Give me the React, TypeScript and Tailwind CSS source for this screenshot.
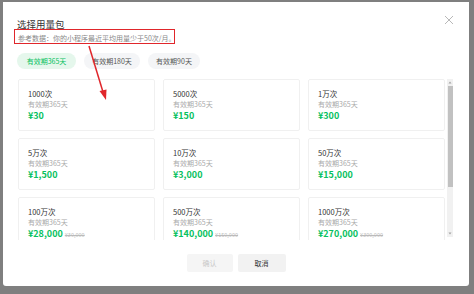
import React from "react";

const cards = [
  { n: "1000次", p: "¥30" },
  { n: "5000次", p: "¥150" },
  { n: "1万次", p: "¥300" },
  { n: "5万次", p: "¥1,500" },
  { n: "10万次", p: "¥3,000" },
  { n: "50万次", p: "¥15,000" },
  { n: "100万次", p: "¥28,000", o: "¥30,000" },
  { n: "500万次", p: "¥140,000", o: "¥150,000" },
  { n: "1000万次", p: "¥270,000", o: "¥300,000" },
];

export default function App() {
  return (
    <div
      className="w-[474px] h-[294px] bg-[#7f7f7f] pt-[2px] pl-[3px] overflow-hidden"
      style={{ fontFamily: '"Noto Sans CJK SC", "Noto Sans", sans-serif' }}
    >
      <div className="relative w-[466px] h-[284px] bg-white rounded-b-[3px] px-[14px] flex flex-col">
        {/* close */}
        <svg className="absolute left-[441px] top-[13px]" width="10" height="10" viewBox="0 0 10 10">
          <path d="M1 1 L9 9 M9 1 L1 9" stroke="#b0b0b0" strokeWidth="0.9" fill="none" />
        </svg>
        <div className="pt-[16px] text-[9.5px] leading-[12px] text-[#333]">选择用量包</div>
        <div className="mt-[3px] ml-[1px] text-[7px] leading-[10px] text-[#888]">
          参考数据：你的小程序最近平均用量少于50次/月。
        </div>
        <div className="mt-[10px] flex gap-[8px] text-[7px]">
          <div className="h-[16px] w-[59px] rounded-full bg-[#e5f7ec] text-[#07c160] flex items-center justify-center">
            有效期365天
          </div>
          <div className="h-[16px] w-[56px] rounded-full bg-[#f4f5f7] text-[#555] flex items-center justify-center">
            有效期180天
          </div>
          <div className="h-[16px] w-[52px] rounded-full bg-[#f4f5f7] text-[#555] flex items-center justify-center">
            有效期90天
          </div>
        </div>
        <div className="mt-[10px] ml-[1px] h-[161px] flex gap-[2px]">
          <div className="w-[427px] h-[161px] overflow-hidden">
            <div className="grid grid-cols-3 gap-x-[8px] gap-y-[7px]">
              {cards.map((c) => (
                <div
                  key={c.n}
                  className="h-[52px] border border-[#f0f0f0] rounded-[2px] pl-[9px] pt-[8px]"
                >
                  <div className="text-[7.5px] leading-[11px] text-[#333]">{c.n}</div>
                  <div className="text-[7px] leading-[11px] text-[#aaa]">有效期365天</div>
                  <div className="flex items-baseline gap-[2px] leading-[12px]">
                    <span className="text-[9px] font-bold text-[#07c160]">{c.p}</span>
                    {c.o && <span className="text-[5.5px] text-[#bbb] line-through">{c.o}</span>}
                  </div>
                </div>
              ))}
            </div>
          </div>
          {/* scrollbar */}
          <div className="w-[6px] h-[158px] bg-[#f1f1f1] flex flex-col items-center">
            <svg width="6" height="7" viewBox="0 0 6 7">
              <path d="M3 2.5 L4.5 4.5 L1.5 4.5 Z" fill="#a3a3a3" />
            </svg>
            <div className="w-[5px] h-[101px] bg-[#c1c1c1]" />
            <div className="flex-1" />
            <svg width="6" height="7" viewBox="0 0 6 7">
              <path d="M3 4.5 L4.5 2.5 L1.5 2.5 Z" fill="#a3a3a3" />
            </svg>
          </div>
        </div>
        <div className="mt-[14px] flex justify-center gap-[5px] text-[7px]">
          <div className="w-[46px] h-[18px] bg-[#f5f5f5] text-[#c8c8c8] rounded-[2px] flex items-center justify-center">
            确认
          </div>
          <div className="w-[48px] h-[18px] bg-[#f2f2f2] text-[#333] rounded-[2px] flex items-center justify-center">
            取消
          </div>
        </div>

        {/* annotation box */}
        <div className="absolute left-[11px] top-[27px] w-[161px] h-[15px] border-[1.5px] border-[#e0262b]" />
        {/* annotation arrow */}
        <svg className="absolute left-0 top-0 pointer-events-none" width="466" height="284">
          <line x1="86" y1="44" x2="100" y2="90" stroke="#e0262b" strokeWidth="1.5" />
          <path d="M103 98 L96.5 89 L103.5 87.5 Z" fill="#e0262b" />
        </svg>
      </div>
    </div>
  );
}
